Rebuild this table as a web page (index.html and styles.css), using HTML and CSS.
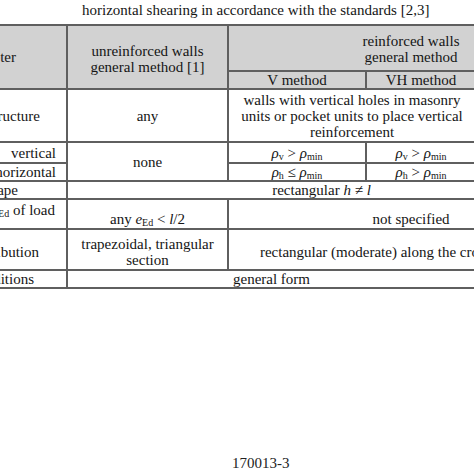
FILE: index.html
```html
<!DOCTYPE html>
<html>
<head>
<meta charset="utf-8">
<link rel="stylesheet" href="styles.css">
</head>
<body>
<div class="page">
  <div class="title">horizontal shearing in accordance with the standards [2,3]</div>
  <div class="table-wrap">
    <table class="cmp">
      <colgroup>
        <col class="w0"><col class="w1"><col class="w2"><col class="w3"><col class="w4">
      </colgroup>
      <tr class="r-head1">
        <th class="c0 p-param" rowspan="2">Parameter</th>
        <th rowspan="2" class="h-unr">unreinforced walls<br>general method [1]</th>
        <th colspan="3" class="h-reinf">reinforced walls<br>general method</th>
      </tr>
      <tr class="r-head2">
        <th>V method</th>
        <th>VH method</th>
        <th></th>
      </tr>
      <tr class="r-structure">
        <td class="c0 p-structure">structure</td>
        <td>any</td>
        <td colspan="2">walls with vertical holes in masonry<br>units or pocket units to place vertical<br>reinforcement</td>
        <td></td>
      </tr>
      <tr class="r-vert">
        <td class="c0 p-sub">reinforcement<span class="gap"></span>vertical</td>
        <td rowspan="2">none</td>
        <td class="math"><i>ρ</i><sub>v</sub> &gt; <i>ρ</i><sub>min</sub></td>
        <td class="math"><i>ρ</i><sub>v</sub> &gt; <i>ρ</i><sub>min</sub></td>
        <td></td>
      </tr>
      <tr class="r-hor">
        <td class="c0 p-sub">reinforcement<span class="gap"></span>horizontal</td>
        <td class="math"><i>ρ</i><sub>h</sub> ≤ <i>ρ</i><sub>min</sub></td>
        <td class="math"><i>ρ</i><sub>h</sub> &gt; <i>ρ</i><sub>min</sub></td>
        <td></td>
      </tr>
      <tr class="r-shape">
        <td class="c0 p-shape">wall shape</td>
        <td colspan="4" class="shape-val">rectangular <i>h</i> ≠ <i>l</i></td>
      </tr>
      <tr class="r-ecc">
        <td class="c0 p-ecc">eccentricity <i>e</i><sub>Ed</sub> of load</td>
        <td class="low">any <i>e</i><sub>Ed</sub> &lt; <i>l</i>/2</td>
        <td colspan="3" class="low">not specified</td>
      </tr>
      <tr class="r-dist">
        <td class="c0 p-dist">stress distribution</td>
        <td class="low2">trapezoidal, triangular<br>section</td>
        <td colspan="3" class="low2 dist-val">rectangular (moderate) along the cross-section</td>
      </tr>
      <tr class="r-cond">
        <td class="c0 p-cond">boundary conditions</td>
        <td colspan="3">general form</td>
        <td></td>
      </tr>
    </table>
  </div>
  <div class="footer">170013-3</div>
</div>
</body>
</html>
```
FILE: styles.css
```css
html, body {
  margin: 0;
  padding: 0;
  background: #fff;
}
body {
  width: 474px;
  height: 474px;
  overflow: hidden;
  font-family: "Liberation Serif", "Times New Roman", serif;
  font-size: 15px;
  color: #151515;
}
.page {
  display: flex;
  flex-direction: column;
  width: 474px;
  height: 474px;
  overflow: hidden;
}
.title {
  padding: 2px 0 0 82px;
  line-height: 17px;
  white-space: nowrap;
}
.table-wrap {
  margin: 5px 0 0 -134px;
}
.cmp {
  border-collapse: collapse;
  table-layout: fixed;
  width: 727px;
  line-height: 16px;
}
.w0 { width: 200px; }
.w1 { width: 161px; }
.w2 { width: 138px; }
.w3 { width: 110px; }
.w4 { width: 118px; }

.cmp th, .cmp td {
  border: 2px solid #5f5f5f;
  padding: 0 4px;
  text-align: center;
  vertical-align: middle;
  font-weight: normal;
  white-space: nowrap;
  overflow: hidden;
}
.cmp th {
  background: #d2d2d2;
}
.cmp sub {
  font-size: 10px;
  line-height: 0;
  vertical-align: -2px;
}
.cmp .c0 {
  text-align: right;
}
.gap {
  display: inline-block;
  width: 16px;
}
.cmp .p-param { padding-right: 50px; }
.cmp .p-structure { padding-right: 26px; }
.cmp .p-sub { padding-right: 10px; }
.cmp .p-shape { padding-right: 48px; }
.cmp .p-ecc { padding-right: 11px; vertical-align: top; padding-top: 2px; }
.cmp .p-dist { padding-right: 27px; padding-top: 4px; }
.cmp .p-cond { padding-right: 32px; }

.cmp .h-unr { padding-top: 4px; }
.cmp .h-reinf { padding-top: 2px; }

.r-head1 { height: 46px; }
.r-head2 { height: 18px; }
.r-structure { height: 53px; }
.r-vert { height: 21px; }
.r-hor { height: 18px; }
.r-shape { height: 18px; }
.r-ecc { height: 30px; }
.r-dist { height: 41px; }
.r-cond { height: 17px; }

.cmp td.low { padding-top: 9px; }
.cmp td.low2 { padding-top: 5px; }
.cmp td.shape-val { padding-right: 22px; }
.cmp td.dist-val { padding-right: 28px; }

.footer {
  margin-top: auto;
  padding: 0 0 2px 232px;
  line-height: 17px;
  color: #222;
}
```
